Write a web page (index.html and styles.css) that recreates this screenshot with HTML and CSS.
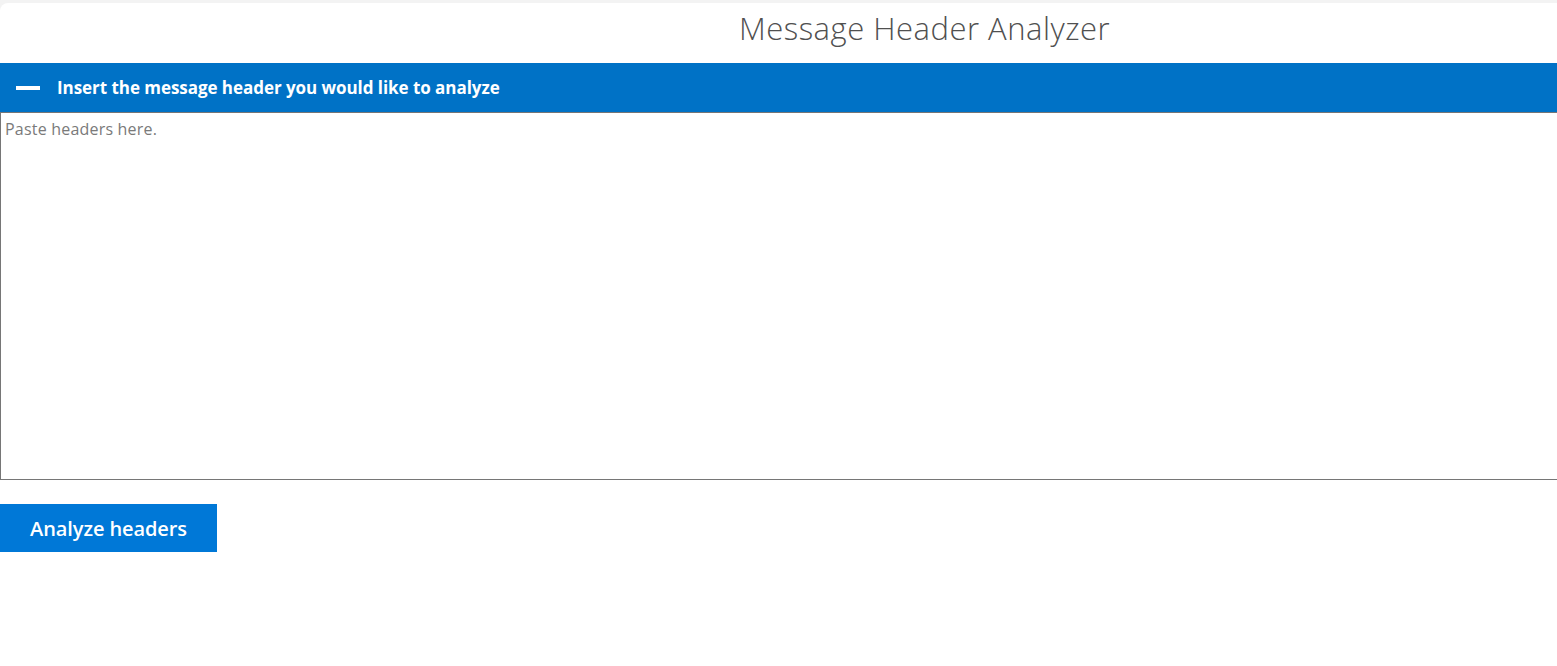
FILE: index.html
```html
<!DOCTYPE html>
<html lang="en">
<head>
<meta charset="utf-8">
<title>Message Header Analyzer</title>
<link rel="stylesheet" href="styles.css">
</head>
<body>
<div class="frame">
  <div class="page">
    <header class="title-row">
      <h1 class="title">Message Header Analyzer</h1>
    </header>
    <section class="input-section">
      <div class="section-bar">
        <span class="collapse-icon"></span>
        <span class="section-title">Insert the message header you would like to analyze</span>
      </div>
      <textarea class="headers-input" placeholder="Paste headers here."></textarea>
    </section>
    <div class="actions">
      <button class="analyze-btn" type="button">Analyze headers</button>
    </div>
  </div>
</div>
</body>
</html>
```

FILE: styles.css
```css
html, body {
  margin: 0;
  padding: 0;
  background: #ffffff;
  overflow: hidden;
}
.frame {
  background: #f3f3f3;
  padding-top: 3px;
  height: 663px;
}
.page {
  background: #ffffff;
  border-top-left-radius: 8px;
  height: 100%;
  font-family: "Open Sans", "Noto Sans", sans-serif;
}
.title-row {
  height: 60px;
  display: flex;
  align-items: center;
  justify-content: center;
  padding-left: 292px;
}
.title {
  margin: 0;
  font-weight: 300;
  font-size: 31px;
  color: #505050;
  letter-spacing: 0.5px;
  line-height: 1;
  padding-bottom: 10px;
}
.section-bar {
  height: 49px;
  background: #0072c6;
  display: flex;
  align-items: center;
  gap: 17px;
  padding-left: 16px;
}
.collapse-icon {
  width: 24px;
  height: 4px;
  background: #ffffff;
}
.section-title {
  color: #ffffff;
  font-weight: 700;
  font-size: 17px;
  letter-spacing: -0.05px;
}
.headers-input {
  display: block;
  box-sizing: border-box;
  width: 100%;
  height: 368px;
  margin: 0;
  border: 1px solid #767676;
  border-right: none;
  padding: 5px 4px;
  resize: none;
  font-family: "Open Sans", "Noto Sans", sans-serif;
  font-size: 16px;
  letter-spacing: 0.2px;
  color: #333;
}
.headers-input::placeholder {
  color: #7a7a7a;
}
.actions {
  padding-top: 24px;
}
.analyze-btn {
  width: 217px;
  height: 48px;
  border: none;
  background: #0078d7;
  color: #ffffff;
  font-family: "Open Sans", "Noto Sans", sans-serif;
  font-weight: 600;
  font-size: 20px;
  letter-spacing: -0.1px;
  padding: 0;
}
```
